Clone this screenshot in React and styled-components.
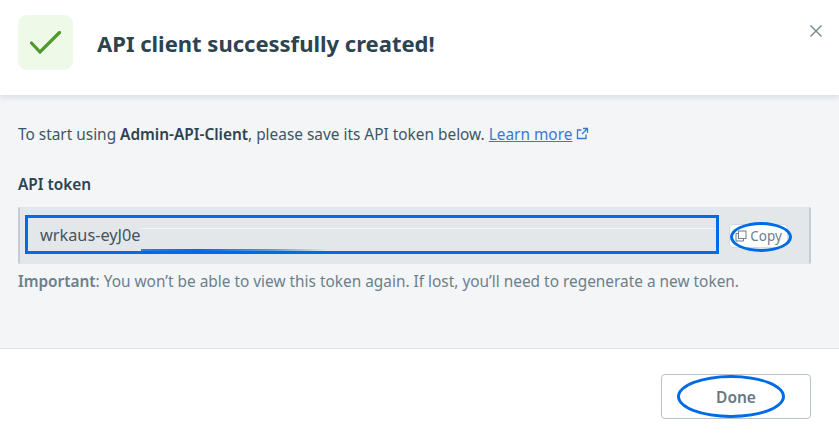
import React from 'react';
import styled, { createGlobalStyle } from 'styled-components';

const GlobalStyle = createGlobalStyle`
  * {
    box-sizing: border-box;
  }
  html,
  body {
    margin: 0;
    padding: 0;
    background: #fff;
  }
  body {
    font-family: 'Noto Sans', 'Open Sans', sans-serif;
    color: #2c4350;
  }
`;

const Modal = styled.div`
  position: relative;
  width: 839px;
  height: 439px;
  display: flex;
  flex-direction: column;
  background: #fff;
  overflow: hidden;
`;

const Header = styled.header`
  height: 95px;
  display: flex;
  align-items: center;
  gap: 24px;
  padding: 0 18px 10px;
  background: #fff;
  box-shadow: 0 2px 6px rgba(44, 67, 80, 0.14);
  position: relative;
`;

const IconTile = styled.div`
  width: 55px;
  height: 55px;
  border-radius: 9px;
  background: #eff9e8;
  display: flex;
  align-items: center;
  justify-content: center;
`;

const Title = styled.h1`
  margin: 0;
  font-size: 22px;
  line-height: 28px;
  font-weight: 700;
  color: #2c4350;
  white-space: nowrap;
`;

const CloseButton = styled.button`
  position: absolute;
  top: 25px;
  right: 17px;
  width: 12px;
  height: 12px;
  padding: 0;
  border: 0;
  background: none;
  display: flex;
`;

const Body = styled.main`
  flex: 1;
  background: #f3f5f7;
  border-bottom: 1px solid #e0e4e8;
  padding: 29px 18px 0;
`;

const Intro = styled.p`
  margin: 0 0 29px;
  font-size: 15.4px;
  line-height: 22px;
  color: #3f5561;
  white-space: nowrap;
  b {
    font-weight: 600;
    color: #2c4350;
  }
`;

const LearnMore = styled.a`
  color: #3a78d4;
  text-decoration: underline;
`;

const Label = styled.div`
  font-size: 15.4px;
  line-height: 20px;
  font-weight: 600;
  color: #2c4350;
  margin-bottom: 12px;
`;

const TokenBar = styled.div`
  width: 793px;
  height: 57px;
  display: flex;
  align-items: center;
  gap: 10px;
  padding: 0 0 2px 5px;
  background: #e4e7ea;
  border-left: 2px solid #c6ccd3;
  border-right: 2px solid #c6ccd3;
  border-radius: 2px;
`;

const TokenField = styled.div`
  position: relative;
  width: 694px;
  height: 39px;
  display: flex;
  align-items: center;
  padding-left: 12px;
  border: 3px solid #006be6;
  font-size: 16.3px;
  color: #3f5561;
`;

const RedactionLine = styled.div`
  position: absolute;
  left: 113px;
  right: 0;
  top: 10px;
  height: 1px;
  background: #f2f4f6;
`;

const RedactionSmear = styled.div`
  position: absolute;
  left: 113px;
  bottom: 0;
  width: 185px;
  height: 2px;
  background: linear-gradient(to right, #2f7fe0, #006be6 30%, #5f97df 70%, #dfe5ea);
`;

const CopyButton = styled.button`
  position: relative;
  width: 59px;
  height: 24px;
  margin-top: 3px;
  display: flex;
  align-items: center;
  justify-content: center;
  gap: 3px;
  padding: 0;
  background: #fff;
  border: 1px solid #d5dae0;
  border-radius: 4px;
  font-family: inherit;
  font-size: 13.5px;
  color: #6b7f8c;
`;

const Note = styled.p`
  margin: 7px 0 0;
  font-size: 15.4px;
  line-height: 22px;
  color: #6b7f8c;
  white-space: nowrap;
  b {
    font-weight: 600;
  }
`;

const Footer = styled.footer`
  height: 90px;
  display: flex;
  justify-content: flex-end;
  align-items: flex-start;
  padding: 25px 28px 0 0;
  background: #fff;
`;

const DoneButton = styled.button`
  position: relative;
  width: 150px;
  height: 45px;
  background: #fff;
  border: 1px solid #b9c2cb;
  border-radius: 4px;
  font-family: inherit;
  font-size: 15.5px;
  font-weight: 600;
  color: #647885;
`;

const Ring = styled.span`
  position: absolute;
  left: ${(p) => p.$left}px;
  top: ${(p) => p.$top}px;
  width: ${(p) => p.$width}px;
  height: ${(p) => p.$height}px;
  border: 3px solid #006be6;
  border-radius: 50%;
  pointer-events: none;
`;

export default function App() {
  return (
    <Modal>
      <GlobalStyle />
      <Header>
        <IconTile>
          <svg width="31" height="23" viewBox="0 0 31 23" fill="none">
            <path d="M1.5 12 L10 21 L29.5 1.5" stroke="#4f9a2c" strokeWidth="3.2" strokeLinecap="round" strokeLinejoin="miter" />
          </svg>
        </IconTile>
        <Title>API client successfully created!</Title>
        <CloseButton aria-label="Close">
          <svg width="12" height="12" viewBox="0 0 12 12" fill="none">
            <path d="M0.5 0.5 L11.5 11.5 M11.5 0.5 L0.5 11.5" stroke="#6f8391" strokeWidth="1.3" />
          </svg>
        </CloseButton>
      </Header>
      <Body>
        <Intro>
          To start using <b>Admin-API-Client</b>, please save its API token below.{' '}
          <LearnMore href="#">Learn more</LearnMore>{' '}
          <svg width="13" height="13" viewBox="0 0 13 13" fill="none" stroke="#3a78d4" strokeWidth="1.3">
            <path d="M10 7.5 V11.5 H1.5 V3 H5.5 M7 1.5 H11.5 V6 M11.5 1.5 L6 7" />
          </svg>
        </Intro>
        <Label>API token</Label>
        <TokenBar>
          <TokenField>
            wrkaus-eyJ0e
            <RedactionLine />
            <RedactionSmear />
          </TokenField>
          <CopyButton>
            <svg width="12" height="12" viewBox="0 0 12 12" fill="none" stroke="#6b7f8c" strokeWidth="1">
              <rect x="3.5" y="1" width="7.5" height="7.5" />
              <path d="M3 3.5 H1 V11 H8.5 V9" />
            </svg>
            Copy
            <Ring $left={0} $top={-3} $width={62} $height={30} />
          </CopyButton>
        </TokenBar>
        <Note>
          <b>Important</b>: You won’t be able to view this token again. If lost, you’ll need to regenerate a new token.
        </Note>
      </Body>
      <Footer>
        <DoneButton>
          Done
          <Ring $left={15} $top={0} $width={108} $height={43} />
        </DoneButton>
      </Footer>
    </Modal>
  );
}
